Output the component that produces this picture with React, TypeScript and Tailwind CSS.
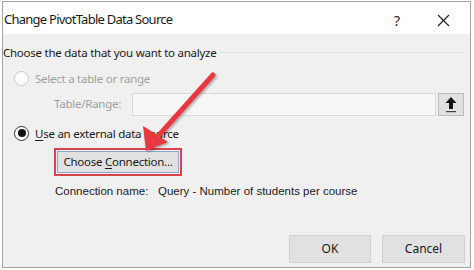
import React from 'react'

const ui = { fontFamily: '"Noto Sans", "Open Sans", sans-serif' }
const arial = { fontFamily: '"Liberation Sans", Arial, sans-serif' }

function Radio({ checked, disabled }: { checked?: boolean; disabled?: boolean }) {
	return (
		<span
			className={`flex items-center justify-center w-[15px] h-[15px] rounded-full border bg-white ${
				disabled ? 'border-[#c8c8c8]' : 'border-[#333333]'
			}`}
		>
			{checked && <span className="w-[8px] h-[8px] rounded-full bg-[#111111]" />}
		</span>
	)
}

function PointerArrow() {
	return (
		<svg
			className="absolute left-0 top-0 pointer-events-none"
			width="474"
			height="270"
			viewBox="0 0 474 270"
		>
			<defs>
				<filter id="sh" x="-20%" y="-20%" width="140%" height="140%">
					<feDropShadow dx="1.5" dy="1.5" stdDeviation="1.2" floodColor="#000" floodOpacity="0.3" />
				</filter>
			</defs>
			<g filter="url(#sh)">
				<line x1="213" y1="75" x2="160" y2="134" stroke="#e8383f" strokeWidth="5" strokeLinecap="round" />
				<polygon points="146,151 143,126 168,142" fill="#e8383f" />
			</g>
		</svg>
	)
}

export default function App() {
	return (
		<div className="relative w-[474px] h-[270px] bg-white overflow-hidden" style={ui}>
			<div className="ml-[2px] mt-[1px] w-[469px] h-[267px] border border-[#a3a3a3] flex flex-col">
				{/* title bar */}
				<div className="h-[32px] bg-white flex items-center pt-[4px] pl-[1px] pr-[20px] shrink-0">
					<span className="text-[13px] text-[#1a1a1a] tracking-[-0.75px]">Change PivotTable Data Source</span>
					<span className="ml-auto text-[14px] text-[#222]">?</span>
					<svg className="ml-[37px]" width="13" height="13" viewBox="0 0 13 13">
						<path d="M1 1L12 12M12 1L1 12" stroke="#222" strokeWidth="1.2" />
					</svg>
				</div>

				{/* body */}
				<div className="flex-1 bg-[#f0f0f0] flex flex-col text-[11.5px] tracking-[-0.25px] text-[#1a1a1a]">
					<div className="flex items-center mt-[10px] pr-[6px]">
						<span className="whitespace-nowrap">Choose the data that you want to analyze</span>
						<span className="flex-1 h-px bg-[#dcdcdc] ml-[4px]" />
					</div>

					<div className="flex items-center gap-[6px] ml-[11px] mt-[9px] text-[#a0a0a0]">
						<Radio disabled />
						<span>Select a table or range</span>
					</div>

					<div className="flex items-center ml-[51px] mt-[5px] pr-[6px]">
						<span className="w-[78px] text-[#a0a0a0] whitespace-nowrap">Table/Range:</span>
						<div className="flex-1 h-[23px] bg-[#f7f7f7] border border-[#d9d9d9]" />
						<div className="ml-[2px] w-[26px] h-[23px] border border-[#bdbdbd] bg-[#e1e1e1] flex items-center justify-center">
							<svg width="14" height="17" viewBox="0 0 14 17">
								<path d="M7 1L1.5 7H5V13H9V7H12.5Z" fill="#111" />
								<rect x="2" y="15" width="10" height="1.2" fill="#444" />
							</svg>
						</div>
					</div>

					<div className="flex items-center gap-[6px] ml-[11px] mt-[9px]">
						<Radio checked />
						<span className="whitespace-nowrap">
							<span className="underline underline-offset-2">U</span>se an external data source
						</span>
					</div>

					<div className="ml-[51px] mt-[6px] w-[128px] h-[28px] border-[2px] border-[#d9434b] p-px">
						<div className="w-full h-full bg-[#e1e1e1] border border-[#8aa6c8] flex items-center justify-center">
							<span className="whitespace-nowrap">
								Choose <span className="underline underline-offset-2">C</span>onnection...
							</span>
						</div>
					</div>

					<div
						className="flex items-center ml-[52px] mt-[7px] text-[11.5px] tracking-normal text-[#222] whitespace-nowrap"
						style={arial}
					>
						<span className="w-[103px]">Connection name:</span>
						<span>Query - Number of students per course</span>
					</div>

					<div className="mt-auto mb-[4px] flex justify-end gap-[11px] pr-[5px] text-[12px] tracking-normal">
						<div className="w-[82px] h-[28px] bg-[#e1e1e1] border border-[#d0d0d0] flex items-center justify-center">
							OK
						</div>
						<div className="w-[83px] h-[28px] bg-[#e1e1e1] border border-[#d0d0d0] flex items-center justify-center">
							Cancel
						</div>
					</div>
				</div>
			</div>
			<PointerArrow />
		</div>
	)
}
